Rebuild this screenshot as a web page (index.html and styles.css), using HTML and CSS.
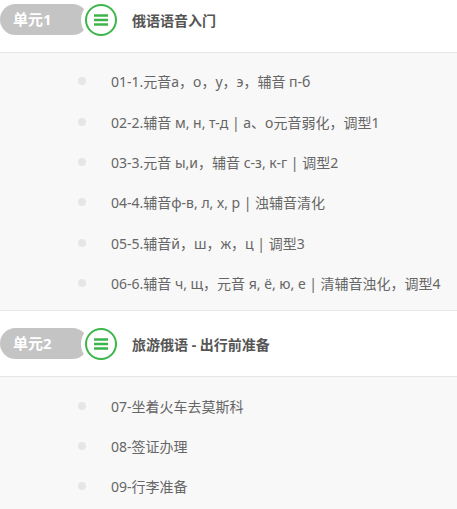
FILE: index.html
```html
<!DOCTYPE html>
<html lang="zh-CN">
<head>
<meta charset="utf-8">
<link rel="stylesheet" href="styles.css">
</head>
<body>
<div class="wrap">
  <section class="unit">
    <div class="head">
      <span class="pill">单元1</span>
      <span class="icon"><svg width="32" height="32" viewBox="0 0 32 32"><circle cx="16" cy="16" r="15" fill="none" stroke="#3cb54a" stroke-width="2"/><path d="M9 11.5h14M9 16h14M9 20.5h14" stroke="#3cb54a" stroke-width="2.4"/></svg></span>
      <span class="title">俄语语音入门</span>
    </div>
    <ul class="list">
      <li class="item"><span class="dot"></span><span class="txt">01-1.元音а，о，у，э，辅音 п-б</span></li>
      <li class="item"><span class="dot"></span><span class="txt">02-2.辅音 м, н, т-д | а、о元音弱化，调型1</span></li>
      <li class="item"><span class="dot"></span><span class="txt">03-3.元音 ы,и，辅音 с-з, к-г | 调型2</span></li>
      <li class="item"><span class="dot"></span><span class="txt">04-4.辅音ф-в, л, х, р | 浊辅音清化</span></li>
      <li class="item"><span class="dot"></span><span class="txt">05-5.辅音й，ш，ж，ц | 调型3</span></li>
      <li class="item"><span class="dot"></span><span class="txt">06-6.辅音 ч, щ，元音 я, ё, ю, е | 清辅音浊化，调型4</span></li>
    </ul>
  </section>
  <section class="unit">
    <div class="head">
      <span class="pill">单元2</span>
      <span class="icon"><svg width="32" height="32" viewBox="0 0 32 32"><circle cx="16" cy="16" r="15" fill="none" stroke="#3cb54a" stroke-width="2"/><path d="M9 11.5h14M9 16h14M9 20.5h14" stroke="#3cb54a" stroke-width="2.4"/></svg></span>
      <span class="title">旅游俄语 - 出行前准备</span>
    </div>
    <ul class="list">
      <li class="item"><span class="dot"></span><span class="txt">07-坐着火车去莫斯科</span></li>
      <li class="item"><span class="dot"></span><span class="txt">08-签证办理</span></li>
      <li class="item"><span class="dot"></span><span class="txt">09-行李准备</span></li>
    </ul>
  </section>
</div>
</body>
</html>
```
FILE: styles.css
```css
html, body {
  margin: 0;
  padding: 0;
  background: #fff;
  overflow: hidden;
}
body {
  font-family: "Noto Sans", "Noto Sans CJK SC", sans-serif;
  font-size: 14px;
  color: #666;
}
.wrap {
  margin-top: -13px;
}
.head {
  height: 65px;
  display: flex;
  align-items: center;
  border-bottom: 1px solid #e6e6e6;
  background: #fff;
}
.pill {
  width: 75px;
  height: 31px;
  padding-left: 13px;
  background: #c4c4c4;
  border-radius: 16px;
  color: #fff;
  font-weight: bold;
  font-size: 15px;
  line-height: 31px;
  box-sizing: content-box;
}
.icon {
  width: 32px;
  height: 32px;
  padding: 4px;
  margin-left: -7px;
  background: #fff;
  border-radius: 50%;
  display: flex;
}
.title {
  margin-left: 11px;
  font-weight: bold;
  color: #555;
  font-size: 14px;
}
.list {
  list-style: none;
  margin: 0;
  padding: 8px 0 7px;
  background: #f8f8f8;
  border-bottom: 1px solid #e6e6e6;
}
.item {
  height: 40.4px;
  display: flex;
  align-items: center;
  padding-left: 78px;
}
.dot {
  width: 8px;
  height: 8px;
  border-radius: 50%;
  background: #e6e6e6;
  flex: none;
}
.txt {
  margin-left: 25px;
  white-space: nowrap;
}
```
